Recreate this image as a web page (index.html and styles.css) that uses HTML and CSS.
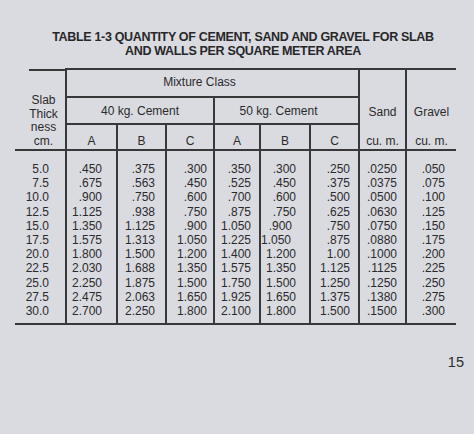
FILE: index.html
```html
<!DOCTYPE html>
<html lang="en">
<head>
<meta charset="utf-8">
<title>Table 1-3 Quantity of Cement, Sand and Gravel</title>
<link rel="stylesheet" href="styles.css">
</head>
<body>
<main class="page">
  <h1 class="title">TABLE 1-3 QUANTITY OF CEMENT, SAND AND GRAVEL FOR SLAB<br>AND WALLS PER SQUARE METER AREA</h1>
  <table class="qty">
    <colgroup>
      <col class="c-slab"><col class="c-40a"><col class="c-40b"><col class="c-40c"><col class="c-50a"><col class="c-50b"><col class="c-50c"><col class="c-sand"><col class="c-gravel">
    </colgroup>
    <thead>
      <tr class="h1">
        <th class="slab" rowspan="3">Slab<br>Thick<br>ness<br>cm.</th>
        <th class="mix" colspan="6">Mixture Class</th>
        <th class="mat" rowspan="2">Sand</th>
        <th class="mat" rowspan="2">Gravel</th>
      </tr>
      <tr class="h2">
        <th colspan="3" class="cem">40 kg. Cement</th>
        <th colspan="3" class="cem cem50">50 kg. Cement</th>
      </tr>
      <tr class="h3">
        <th>A</th><th>B</th><th>C</th><th>A</th><th>B</th><th>C</th>
        <th class="unit">cu. m.</th><th class="unit">cu. m.</th>
      </tr>
    </thead>
    <tbody>
      <tr class="first"><td>5.0</td><td>.450</td><td>.375</td><td>.300</td><td>.350</td><td>.300</td><td>.250</td><td>.0250</td><td>.050</td></tr>
      <tr><td>7.5</td><td>.675</td><td>.563</td><td>.450</td><td>.525</td><td>.450</td><td>.375</td><td>.0375</td><td>.075</td></tr>
      <tr><td>10.0</td><td>.900</td><td>.750</td><td>.600</td><td>.700</td><td>.600</td><td>.500</td><td>.0500</td><td>.100</td></tr>
      <tr><td>12.5</td><td>1.125</td><td>.938</td><td>.750</td><td>.875</td><td>.750</td><td>.625</td><td>.0630</td><td>.125</td></tr>
      <tr><td>15.0</td><td>1.350</td><td>1.125</td><td>.900</td><td>1.050</td><td class="off1">.900</td><td>.750</td><td>.0750</td><td>.150</td></tr>
      <tr><td>17.5</td><td>1.575</td><td>1.313</td><td>1.050</td><td>1.225</td><td class="off2">1.050</td><td>.875</td><td>.0880</td><td>.175</td></tr>
      <tr><td>20.0</td><td>1.800</td><td>1.500</td><td>1.200</td><td>1.400</td><td>1.200</td><td>1.00</td><td>.1000</td><td>.200</td></tr>
      <tr><td>22.5</td><td>2.030</td><td>1.688</td><td>1.350</td><td>1.575</td><td>1.350</td><td>1.125</td><td>.1125</td><td>.225</td></tr>
      <tr><td>25.0</td><td>2.250</td><td>1.875</td><td>1.500</td><td>1.750</td><td>1.500</td><td>1.250</td><td>.1250</td><td>.250</td></tr>
      <tr><td>27.5</td><td>2.475</td><td>2.063</td><td>1.650</td><td>1.925</td><td>1.650</td><td>1.375</td><td>.1380</td><td>.275</td></tr>
      <tr class="last"><td>30.0</td><td>2.700</td><td>2.250</td><td>1.800</td><td>2.100</td><td>1.800</td><td>1.500</td><td>.1500</td><td>.300</td></tr>
    </tbody>
  </table>
  <p class="pageno">15</p>
</main>
</body>
</html>
```
FILE: styles.css
```css
html, body {
  margin: 0;
  padding: 0;
}
body {
  background: #dadbe0;
  color: #2a2a2d;
  font-family: "Liberation Sans", Arial, sans-serif;
  width: 474px;
  height: 434px;
  overflow: hidden;
}
.page {
  padding-top: 30px;
}
.title {
  margin: 0;
  padding-left: 12px;
  font-size: 12.5px;
  line-height: 14px;
  font-weight: 700;
  letter-spacing: -0.33px;
  text-align: center;
  color: #27272a;
}
.qty {
  margin: 10px 0 0 15px;
  width: 441px;
  border-collapse: collapse;
  table-layout: fixed;
  font-size: 12px;
}
.c-slab { width: 51px; }
.c-40a { width: 51px; }
.c-40b { width: 49px; }
.c-40c { width: 48px; }
.c-50a { width: 46px; }
.c-50b { width: 50px; }
.c-50c { width: 49px; }
.c-sand { width: 47px; }
.c-gravel { width: 50px; }

.qty th {
  font-weight: 400;
  padding: 0;
  border: 2px solid #38383b;
  text-align: center;
}
.qty th.slab {
  border-left: none;
  border-top: none;
  line-height: 13.4px;
  vertical-align: bottom;
  padding: 0 0 1px 7px;
  background: linear-gradient(#38383b, #38383b) no-repeat 14px 0 / calc(100% - 14px) 2px;
}
.qty th.mat:last-child,
.qty th.unit:last-child {
  border-right: none;
}
.qty .h1 th { height: 23px; }
.qty .h1 .mix {
  vertical-align: middle;
  padding: 0 26px 3px 0;
}
.qty .h1 .mat {
  vertical-align: bottom;
  padding-bottom: 5px;
  border-bottom: none;
}
.qty .h2 th {
  height: 25px;
  vertical-align: middle;
}
.qty .h2 .cem50 { padding-right: 16px; }
.qty .h3 th {
  height: 23px;
  vertical-align: bottom;
  padding-bottom: 1px;
}
.qty .h3 .unit { border-top: none; }

.qty td {
  padding: 0;
  height: 14.2px;
  line-height: 14.2px;
  text-align: right;
  border-left: 2px solid #38383b;
  border-right: 2px solid #38383b;
}
.qty td:first-child { border-left: none; padding-right: 16px; }
.qty td:last-child { border-right: none; padding-right: 11px; }
.qty td:nth-child(2) { padding-right: 14px; }
.qty td:nth-child(3) { padding-right: 10px; }
.qty td:nth-child(4) { padding-right: 6px; }
.qty td:nth-child(5) { padding-right: 8px; }
.qty td:nth-child(6) { padding-right: 13px; }
.qty td:nth-child(7) { padding-right: 8px; }
.qty td:nth-child(8) { padding-right: 8px; }
.qty td.off1 { padding-right: 17px; }
.qty td.off2 { padding-right: 21px; }
.qty tr.first td { padding-top: 11px; }
.qty tr.last td {
  padding-bottom: 5px;
  border-bottom: 2px solid #38383b;
}
.pageno {
  margin: 29px 0 0;
  padding-right: 10px;
  text-align: right;
  font-size: 14.5px;
  line-height: 16px;
}
```
